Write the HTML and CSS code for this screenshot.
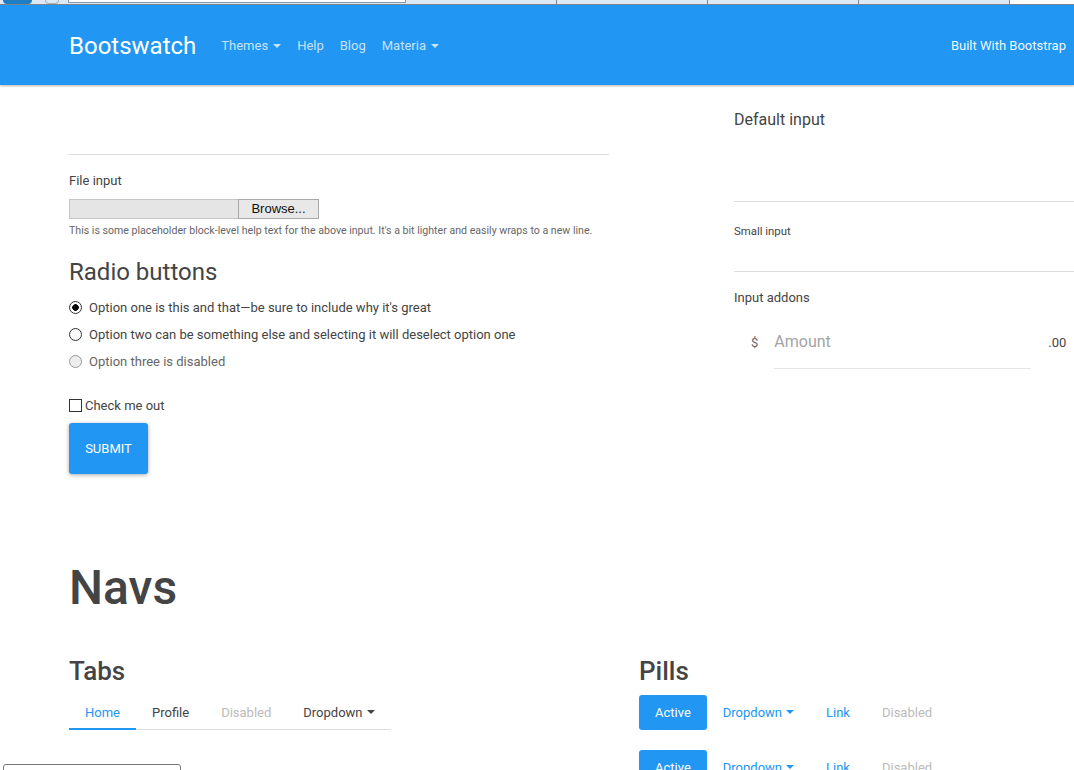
FILE: index.html
```html
<!DOCTYPE html>
<html lang="en">
<head>
<meta charset="utf-8">
<title>Bootswatch: Materia</title>
<link rel="stylesheet" href="styles.css">
</head>
<body>
<div class="strip">
  <span class="s-blob"></span>
  <span class="s-ring"></span>
  <span class="s-url"></span>
  <span class="s-tab"></span>
  <span class="s-tab"></span>
  <span class="s-tab"></span>
  <span class="s-tab"></span>
  <span class="s-rest"></span>
</div>
<header class="navbar">
  <a class="brand" href="#">Bootswatch</a>
  <ul class="nav">
    <li><a href="#" class="nav-link">Themes<span class="caret"></span></a></li>
    <li><a href="#" class="nav-link">Help</a></li>
    <li><a href="#" class="nav-link">Blog</a></li>
    <li><a href="#" class="nav-link">Materia<span class="caret"></span></a></li>
  </ul>
  <a class="nav-right" href="#">Built With Bootstrap</a>
</header>

<main class="container">
  <section class="forms">
    <div class="col-left">
      <div class="input-tail textarea-tail"></div>

      <div class="group">
        <label class="label">File input</label>
        <div class="file"><span class="file-field"></span><span class="file-btn">Browse...</span></div>
        <small class="help">This is some placeholder block-level help text for the above input. It's a bit lighter and easily wraps to a new line.</small>
      </div>

      <fieldset class="radios">
        <legend>Radio buttons</legend>
        <label class="check-row"><input type="radio" name="r" checked><span>Option one is this and that—be sure to include why it's great</span></label>
        <label class="check-row"><input type="radio" name="r"><span>Option two can be something else and selecting it will deselect option one</span></label>
        <label class="check-row disabled"><input type="radio" name="r" disabled><span>Option three is disabled</span></label>
      </fieldset>

      <label class="check-row checkbox"><input type="checkbox"><span>Check me out</span></label>
      <button class="btn-submit" type="button">SUBMIT</button>
    </div>

    <div class="col-right">
      <label class="label label-lg">Default input</label>
      <div class="input-tail tail-lg"></div>
      <label class="label label-sm">Small input</label>
      <div class="input-tail tail-sm"></div>
      <label class="label label-addon">Input addons</label>
      <div class="input-group">
        <span class="addon addon-pre">$</span>
        <span class="addon-input">Amount</span>
        <span class="addon addon-post">.00</span>
      </div>
    </div>
  </section>

  <h1 class="section-title">Navs</h1>

  <section class="navs">
    <div class="col-tabs">
      <h2 class="sub-title">Tabs</h2>
      <ul class="tabs">
        <li><a href="#" class="tab active">Home</a></li>
        <li><a href="#" class="tab">Profile</a></li>
        <li><a href="#" class="tab disabled">Disabled</a></li>
        <li><a href="#" class="tab">Dropdown<span class="caret"></span></a></li>
      </ul>
    </div>
    <div class="col-pills">
      <h2 class="sub-title">Pills</h2>
      <ul class="pills">
        <li><a href="#" class="pill active">Active</a></li>
        <li><a href="#" class="pill">Dropdown<span class="caret"></span></a></li>
        <li><a href="#" class="pill">Link</a></li>
        <li><a href="#" class="pill disabled">Disabled</a></li>
      </ul>
      <ul class="pills second">
        <li><a href="#" class="pill active">Active</a></li>
        <li><a href="#" class="pill">Dropdown<span class="caret"></span></a></li>
        <li><a href="#" class="pill">Link</a></li>
        <li><a href="#" class="pill disabled">Disabled</a></li>
      </ul>
    </div>
  </section>
</main>

<div class="select-stub"></div>
</body>
</html>
```

FILE: styles.css
```css
html, body {
  margin: 0;
  padding: 0;
  overflow: hidden;
  height: 770px;
}
body {
  font-family: Roboto, "Noto Sans", "Liberation Sans", sans-serif;
  font-size: 13px;
  line-height: 1.5;
  color: #444;
  background: #fff;
}
ul { list-style: none; margin: 0; padding: 0; }
a { text-decoration: none; }

/* top browser-like strip */
.strip {
  height: 4px;
  background: #dfe9f5;
  border-bottom: 1px solid #7c8794;
  display: flex;
  overflow: hidden;
}
.s-blob {
  width: 29px;
  margin-left: 3px;
  height: 4px;
  background: #1f7dc3;
  border-radius: 0 0 14px 14px;
}
.s-ring {
  width: 12px;
  height: 3px;
  margin-left: 13px;
  border: 1px solid #a8b0ba;
  border-top: 0;
  border-radius: 0 0 7px 7px;
}
.s-url {
  width: 336px;
  margin-left: 9px;
  height: 2px;
  background: #fff;
  border: 1px solid #8796a9;
  border-top: 0;
}
.s-tab {
  width: 150px;
  border-right: 1px solid #7c8794;
}
.s-rest {
  flex: 1;
  background: #fff;
}

/* navbar */
.navbar {
  height: 78px;
  padding: 2px 8px 0 69px;
  background: #2196f3;
  display: flex;
  align-items: center;
  box-shadow: 0 1px 2px rgba(0,0,0,0.3);
  position: relative;
  z-index: 2;
}
.brand {
  color: #fff;
  font-size: 24px;
  line-height: 1;
  margin-right: 17px;
}
.nav {
  display: flex;
  flex: 1;
}
.nav-link {
  display: block;
  padding: 0 8px;
  color: rgba(255,255,255,0.75);
  font-size: 13px;
}
.nav .caret {
  margin-left: 5px;
  border-left-width: 4.5px;
  border-right-width: 4.5px;
}
.nav-right {
  color: rgba(255,255,255,0.95);
  font-size: 13px;
}
.caret {
  display: inline-block;
  margin-left: 4px;
  vertical-align: 2px;
  border-top: 4px solid currentColor;
  border-left: 4px solid transparent;
  border-right: 4px solid transparent;
}

/* layout */
.container {
  margin-left: 69px;
  width: 1015px;
}
.forms {
  display: flex;
  align-items: flex-start;
}
.col-left { width: 540px; }
.col-right { width: 350px; margin-left: 125px; }

.input-tail {
  border-bottom: 1px solid #dcdcdc;
}
.textarea-tail { height: 69px; }

.label {
  display: block;
  font-size: 13px;
  line-height: 19.5px;
  color: #444;
}
.group { margin-top: 16px; }
.group .label { margin-bottom: 8px; }

.file {
  display: flex;
  height: 20px;
  font-family: "Liberation Sans", Arial, sans-serif;
  font-size: 13px;
  color: #111;
}
.file-field {
  width: 168px;
  background: #e5e5e5;
  border: 1px solid #c6c6c6;
  border-right: 0;
}
.file-btn {
  width: 79px;
  background: #e8e8e8;
  border: 1px solid #a9a9a9;
  text-align: center;
  line-height: 18px;
}
.help {
  display: block;
  margin-top: 4px;
  font-size: 10.6px;
  line-height: 15.6px;
  color: #666;
}

.radios {
  border: 0;
  padding: 0;
  margin: 20px 0 0;
}
.radios legend {
  padding: 0;
  font-size: 24px;
  line-height: 28.8px;
  margin-bottom: 7.5px;
  color: #444;
}
.check-row {
  display: flex;
  align-items: center;
  height: 27px;
  color: #444;
}
.check-row input {
  -webkit-appearance: none;
  appearance: none;
  width: 13px;
  height: 13px;
  margin: 0 7px 0 0;
  border: 1px solid #333;
  border-radius: 50%;
  background: #fff;
  flex: none;
}
.check-row input:checked {
  background: radial-gradient(circle, #000 0, #000 3px, #fff 3.6px);
}
.check-row.disabled { color: #666; }
.check-row.disabled input {
  border-color: #999;
  background: #eee;
}
.checkbox { margin-top: 17px; }
.checkbox input {
  border-radius: 0;
  margin-right: 3px;
}
.btn-submit {
  display: block;
  margin-top: 4px;
  width: 79px;
  height: 51px;
  border: 0;
  border-radius: 3px;
  background: #2196f3;
  color: #fff;
  font-family: inherit;
  font-size: 13px;
  box-shadow: 0 1px 4px rgba(0,0,0,0.35);
  padding: 0;
}

/* right column */
.label-lg {
  font-size: 16px;
  line-height: 24px;
  margin-top: 22.5px;
}
.tail-lg { height: 69px; }
.label-sm {
  font-size: 11.4px;
  line-height: 17px;
  margin-top: 21.5px;
}
.tail-sm { height: 30.5px; }
.label-addon { margin-top: 16.3px; }
.input-group {
  display: flex;
  align-items: stretch;
  height: 53px;
  margin-top: 9px;
}
.addon {
  display: flex;
  align-items: center;
  padding: 0 16px 0 17px;
  color: #666;
}
.addon-post { color: #444; }
.addon-input {
  display: flex;
  align-items: center;
  width: 257px;
  font-size: 16px;
  color: #a4a4a4;
  border-bottom: 1px solid #e6e6e6;
}

/* navs */
.section-title {
  margin: 84.4px 0 0;
  font-size: 48px;
  line-height: 57.6px;
  font-weight: 500;
  color: #444;
}
.navs { display: flex; }
.col-tabs { width: 570px; }
.col-pills { width: 445px; }
.sub-title {
  margin: 40px 0 0;
  font-size: 26px;
  line-height: 31.2px;
  font-weight: 500;
  color: #444;
}
.tabs {
  display: inline-flex;
  margin-top: 7.4px;
  box-shadow: inset 0 -1px 0 #dcdcdc;
}
.tab {
  display: flex;
  align-items: center;
  height: 35px;
  padding: 0 16px;
  color: #444;
}
.tab.active {
  color: #2196f3;
  box-shadow: inset 0 -2px 0 #2196f3;
}
.tab.disabled { color: #bbb; }
.pills {
  display: flex;
  margin-top: 7.4px;
}
.pills.second { margin-top: 20px; }
.pill {
  display: flex;
  align-items: center;
  height: 35px;
  padding: 0 16px;
  color: #2196f3;
  border-radius: 3px;
}
.pill.active {
  background: #2196f3;
  color: #fff;
}
.pill.disabled { color: #bbb; }

.select-stub {
  position: fixed;
  left: 3px;
  top: 764px;
  width: 176px;
  height: 20px;
  border: 1px solid #767676;
  border-radius: 3px;
  background: #fff;
}
```
